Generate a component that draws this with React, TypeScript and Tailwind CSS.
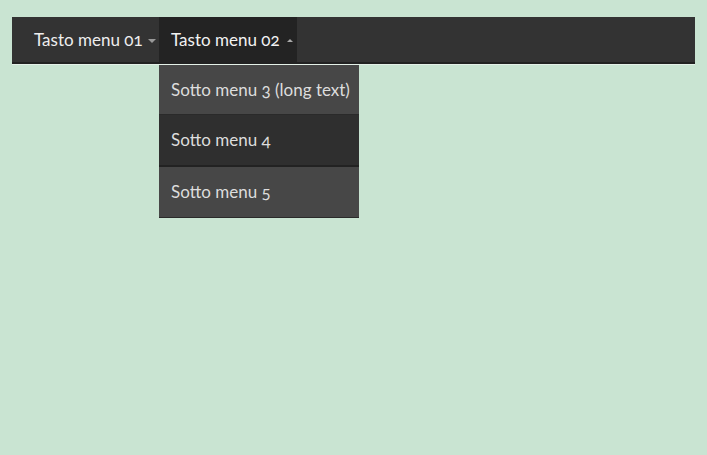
export default function App() {
  const font = { fontFamily: "Lato, 'Open Sans', sans-serif" };
  return (
    <div className="min-h-screen bg-[#c9e4d2] pt-[17px] px-[12px]" style={font}>
      <nav className="h-[47px] bg-[#333333] border-b-2 border-[#222222] flex pl-[10px] shadow-[0_1px_0_#e4f1e8]">
        <div className="flex items-center w-[137px] h-full pl-[12px] text-[17px] text-[#eeeeee] oldstyle-nums">
          <span>Tasto menu 01</span>
          <span className="ml-[5px] mt-[2px] w-0 h-0 border-x-[4px] border-x-transparent border-t-[4px] border-t-[#999999]" />
        </div>
        <div className="relative h-full">
          <div className="flex items-center w-[138px] h-[45px] pl-[12px] bg-[#232323] text-[17px] text-[#f2f2f2] oldstyle-nums">
            <span>Tasto menu 02</span>
            <span className="ml-[7px] mt-[1px] w-0 h-0 border-x-[3px] border-x-transparent border-b-[3px] border-b-[#aaaaaa]" />
          </div>
          <ul className="absolute left-0 top-[48px] w-[200px] text-[17px] text-[#dddddd] oldstyle-nums">
            <li className="h-[50px] flex items-center pl-[12px] bg-[#474747] border-b border-[#2a2a2a]">Sotto menu 3 (long text)</li>
            <li className="h-[52px] flex items-center pl-[12px] bg-[#2f2f2f] border-b-2 border-[#222222]">Sotto menu 4</li>
            <li className="h-[51px] flex items-center pl-[12px] bg-[#474747] border-b border-[#2a2a2a]">Sotto menu 5</li>
          </ul>
        </div>
      </nav>
    </div>
  );
}
